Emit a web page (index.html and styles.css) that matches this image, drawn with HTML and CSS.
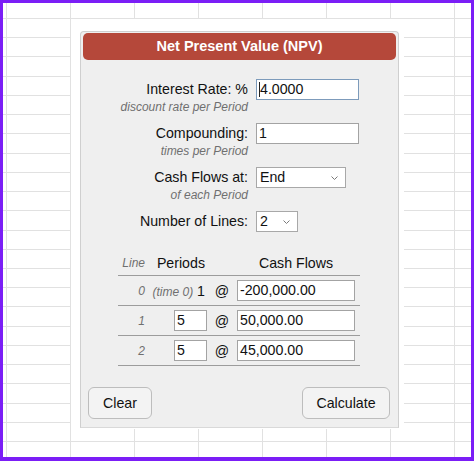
FILE: index.html
```html
<!DOCTYPE html>
<html lang="en">
<head>
<meta charset="utf-8">
<title>Net Present Value (NPV)</title>
<link rel="stylesheet" href="styles.css">
</head>
<body>
<div class="frame">
  <div class="cover">
    <div class="panel">
      <div class="title">Net Present Value (NPV)</div>
      <div class="form">
        <div class="field">
          <div class="lbl">Interest Rate: %</div>
          <div class="box focus w-rate"><span class="caret"></span>4.0000</div>
          <div class="cap">discount rate per Period</div>
        </div>
        <div class="field">
          <div class="lbl">Compounding:</div>
          <div class="box w-rate">1</div>
          <div class="cap">times per Period</div>
        </div>
        <div class="field">
          <div class="lbl">Cash Flows at:</div>
          <div class="select w-end"><span>End</span>
            <svg class="chev" width="7" height="4" viewBox="0 0 7 4"><path d="M0.5 0.5 L3.5 3.5 L6.5 0.5" fill="none" stroke="#7a7a7a" stroke-width="1"/></svg>
          </div>
          <div class="cap">of each Period</div>
        </div>
        <div class="field">
          <div class="lbl">Number of Lines:</div>
          <div class="select w-lines"><span>2</span>
            <svg class="chev" width="7" height="4" viewBox="0 0 7 4"><path d="M0.5 0.5 L3.5 3.5 L6.5 0.5" fill="none" stroke="#7a7a7a" stroke-width="1"/></svg>
          </div>
        </div>
      </div>
      <div class="flows">
        <div class="trow head">
          <div class="c-line small">Line</div>
          <div class="c-per"><span class="pad">Periods</span></div>
          <div class="c-at"></div>
          <div class="c-cash hcash">Cash Flows</div>
        </div>
        <div class="trow">
          <div class="c-line small">0</div>
          <div class="c-per"><span class="pad"><span class="small">(time 0)</span> 1</span></div>
          <div class="c-at">@</div>
          <div class="c-cash"><div class="box w-cash">-200,000.00</div></div>
        </div>
        <div class="trow">
          <div class="c-line small">1</div>
          <div class="c-per"><div class="box w-per">5</div></div>
          <div class="c-at">@</div>
          <div class="c-cash"><div class="box w-cash">50,000.00</div></div>
        </div>
        <div class="trow">
          <div class="c-line small">2</div>
          <div class="c-per"><div class="box w-per">5</div></div>
          <div class="c-at">@</div>
          <div class="c-cash"><div class="box w-cash">45,000.00</div></div>
        </div>
      </div>
      <div class="buttons">
        <button class="btn w-clear">Clear</button>
        <button class="btn w-calc">Calculate</button>
      </div>
    </div>
  </div>
</div>
</body>
</html>
```

FILE: styles.css
```css
body {
  margin: 0;
  font-family: "Liberation Sans", Arial, sans-serif;
  color: #111;
}

.frame {
  width: 474px;
  height: 461px;
  box-sizing: border-box;
  border-style: solid;
  border-color: #7b1ef6;
  border-width: 3px 3px 4px 3px;
  background-color: #fff;
  background-image:
    repeating-linear-gradient(to right, transparent 0 3px, #e1e1e1 3px 4px, transparent 4px 64px),
    repeating-linear-gradient(to bottom, transparent 0 15px, #e1e1e1 15px 16px, transparent 16px 19.23px);
  overflow: hidden;
  padding: 16px 0 0 68px;
}

.cover {
  width: 333px;
  height: 410px;
  box-sizing: border-box;
  background: #fff;
  padding: 12px 0 0 9px;
}

.panel {
  width: 319px;
  height: 397px;
  box-sizing: border-box;
  border: 1px solid #cfcfcf;
  border-bottom-color: #d9d9d9;
  border-radius: 4px 4px 0 0;
  background: #efefef;
  padding: 1px 2px 0;
}

.title {
  height: 27px;
  line-height: 27px;
  background: #b5483a;
  color: #fff;
  font-weight: bold;
  font-size: 14.5px;
  text-align: center;
  border-radius: 5px;
}

.form {
  padding-top: 19px;
}

.field {
  display: grid;
  grid-template-columns: 165px auto;
  column-gap: 8px;
  margin-top: 9px;
  justify-items: start;
}

.field:first-child {
  margin-top: 0;
}

.lbl {
  font-size: 14.2px;
  line-height: 21px;
  text-align: right;
  justify-self: end;
}

.cap {
  grid-column: 1;
  justify-self: end;
  font-size: 12px;
  line-height: 14px;
  font-style: italic;
  color: #6f6f6f;
}

.box {
  height: 21px;
  box-sizing: border-box;
  border: 1px solid #a3a3a3;
  background: #fff;
  font-size: 14.2px;
  line-height: 19px;
  padding: 0 2px;
  white-space: nowrap;
}

.box.focus {
  border-color: #7d9bbb;
}

.caret {
  display: inline-block;
  width: 1px;
  height: 15px;
  background: #222;
  vertical-align: -3px;
}

.w-rate { width: 103px; }
.w-cash { width: 118px; }
.w-per { width: 33px; }

.select {
  height: 21px;
  box-sizing: border-box;
  border: 1px solid #a8a8a8;
  background: #fff;
  font-size: 14.2px;
  line-height: 19px;
  padding: 0 7px 0 3px;
  display: flex;
  align-items: center;
  justify-content: space-between;
}

.w-end { width: 90px; }
.w-lines { width: 42px; }

.flows {
  margin: 18px 0 0 35px;
  width: 242px;
}

.trow {
  display: grid;
  grid-template-columns: 30px 59px 30px 123px;
  height: 30px;
  box-sizing: border-box;
  border-bottom: 1px solid #9c9c9c;
  align-items: center;
  font-size: 14.2px;
}

.trow.head {
  height: 26px;
}

.small {
  font-size: 12px;
  font-style: italic;
  color: #6f6f6f;
}

.c-line {
  text-align: right;
  padding-right: 3px;
}

.c-per {
  display: flex;
  justify-content: flex-end;
}

.pad {
  padding-right: 2px;
}

.c-at {
  text-align: center;
}

.hcash {
  text-align: center;
  padding-right: 5px;
}

.buttons {
  display: flex;
  justify-content: space-between;
  padding: 0 6px 0 5px;
  margin-top: 21px;
}

.btn {
  height: 32px;
  box-sizing: border-box;
  border: 1px solid #bdbdbd;
  border-radius: 6px;
  background: #f3f3f3;
  font-family: "Liberation Sans", Arial, sans-serif;
  font-size: 14.2px;
  color: #111;
  padding: 0;
}

.w-clear { width: 64px; }
.w-calc { width: 88px; }
```
